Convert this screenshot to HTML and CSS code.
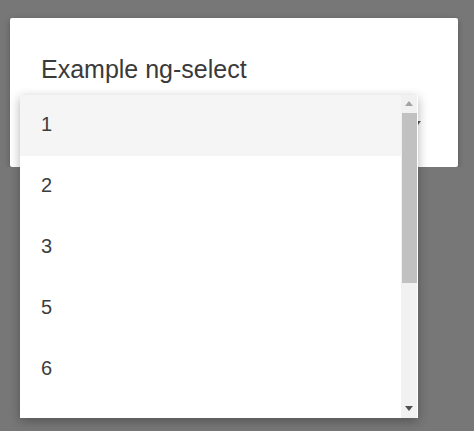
FILE: index.html
```html
<!DOCTYPE html>
<html lang="en">
<head>
    <meta charset="UTF-8">
    <meta name="viewport" content="width=device-width, initial-scale=1.0">
    <title>Example ng-select</title>
    <link rel="stylesheet" href="styles.css">
</head>
<body>
    <div class="card">
        <h1>Example ng-select</h1>
        <div class="ng-select">
            <span class="ng-arrow"></span>
        </div>
    </div>

    <div class="dropdown-panel">
        <div class="options">
            <div class="option marked">1</div>
            <div class="option">2</div>
            <div class="option">3</div>
            <div class="option">5</div>
            <div class="option">6</div>
        </div>
        <div class="scrollbar">
            <div class="scroll-btn">
                <svg width="8" height="5" viewBox="0 0 8 5"><path d="M0 5 L4 0 L8 5 Z" fill="#a3a3a3"/></svg>
            </div>
            <div class="scroll-track">
                <div class="scroll-thumb"></div>
            </div>
            <div class="scroll-btn down">
                <svg width="8" height="5" viewBox="0 0 8 5"><path d="M0 0 L8 0 L4 5 Z" fill="#505050"/></svg>
            </div>
        </div>
    </div>
</body>
</html>
```

FILE: styles.css
```css
body {
    font-family: "Liberation Sans", Arial, sans-serif;
    background-color: #777777;
    color: #333;
    margin: 0;
    padding: 18px 16px 0 10px;
}
.card {
    position: relative;
    width: 448px;
    height: 149px;
    box-sizing: border-box;
    padding: 31px 31px 0 31px;
    background-color: #ffffff;
    border-radius: 2px;
    box-shadow: 0 2px 6px rgba(0, 0, 0, 0.25);
}
h1 {
    font-size: 25px;
    font-weight: normal;
    color: #3a3a3a;
    margin: 0;
    line-height: 40px;
}
.ng-select {
    display: flex;
    justify-content: flex-end;
    height: 40px;
    padding-top: 32px;
    margin-right: 6px;
}
.ng-arrow {
    width: 0;
    height: 0;
    border-left: 3px solid transparent;
    border-right: 3px solid transparent;
    border-top: 4px solid #555;
}
/* open dropdown, floats over the card */
.dropdown-panel {
    position: absolute;
    left: 20px;
    top: 95px;
    width: 398px;
    height: 323px;
    display: flex;
    background-color: #ffffff;
    box-shadow: 0 3px 10px rgba(0, 0, 0, 0.3);
}
.options {
    flex: 1;
    overflow: hidden;
}
.option {
    height: 61px;
    line-height: 59px;
    padding-left: 21px;
    font-size: 20px;
    color: #3d3d3d;
}
.option.marked {
    background-color: #f5f5f5;
}
.scrollbar {
    width: 16px;
    margin-right: 1px;
    display: flex;
    flex-direction: column;
    background-color: #f1f1f1;
}
.scroll-btn {
    height: 16px;
    display: flex;
    align-items: center;
    justify-content: center;
}
.scroll-btn.down {
    height: 20px;
}
.scroll-track {
    flex: 1;
    padding: 2px 0 0 1px;
}
.scroll-thumb {
    height: 170px;
    background-color: #c1c1c1;
}
```
